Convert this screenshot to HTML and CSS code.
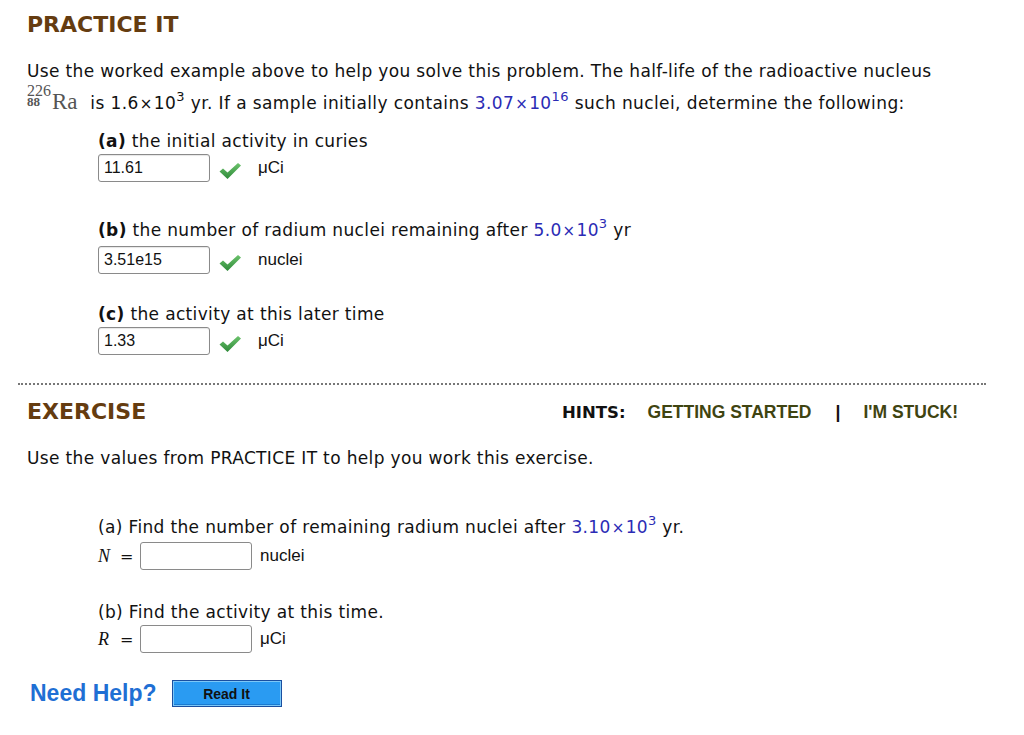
FILE: index.html
```html
<!DOCTYPE html>
<html>
<head>
<meta charset="utf-8">
<link rel="stylesheet" href="styles.css">
</head>
<body>
<div class="page">
  <section class="practice">
    <h2 class="title">PRACTICE IT</h2>
    <div class="intro">
      <div class="line1">Use the worked example above to help you solve this problem. The half-life of the radioactive nucleus</div>
      <div class="line2"><span class="nuc"><span class="iso"><span class="mass">226</span><span class="z">88</span></span><span class="ra">Ra</span></span> is 1.6<span class="times">×</span>10<sup>3</sup> yr. If a sample initially contains <span class="num">3.07<span class="times">×</span>10<sup>16</sup></span> such nuclei, determine the following:</div>
    </div>

    <div class="part part-a">
      <div class="qlabel"><b>(a)</b> the initial activity in curies</div>
      <div class="row">
        <span class="answer">11.61</span>
        <svg class="check" viewBox="0 0 24 20" width="24" height="20"><defs><linearGradient id="g1" x1="0" y1="0" x2="0" y2="1"><stop offset="0" stop-color="#6cc36c"/><stop offset="1" stop-color="#2f8a3a"/></linearGradient></defs><path d="M1.5 10.5 L5 7.5 L9.5 11.5 L20 2 L23 4.5 L9.5 18 Z" fill="url(#g1)"/></svg>
        <span class="unit">μCi</span>
      </div>
    </div>

    <div class="part part-b">
      <div class="qlabel"><b>(b)</b> the number of radium nuclei remaining after <span class="num">5.0<span class="times">×</span>10<sup>3</sup></span> yr</div>
      <div class="row">
        <span class="answer">3.51e15</span>
        <svg class="check" viewBox="0 0 24 20" width="24" height="20"><defs><linearGradient id="g2" x1="0" y1="0" x2="0" y2="1"><stop offset="0" stop-color="#6cc36c"/><stop offset="1" stop-color="#2f8a3a"/></linearGradient></defs><path d="M1.5 10.5 L5 7.5 L9.5 11.5 L20 2 L23 4.5 L9.5 18 Z" fill="url(#g2)"/></svg>
        <span class="unit">nuclei</span>
      </div>
    </div>

    <div class="part part-c">
      <div class="qlabel"><b>(c)</b> the activity at this later time</div>
      <div class="row">
        <span class="answer">1.33</span>
        <svg class="check" viewBox="0 0 24 20" width="24" height="20"><defs><linearGradient id="g3" x1="0" y1="0" x2="0" y2="1"><stop offset="0" stop-color="#6cc36c"/><stop offset="1" stop-color="#2f8a3a"/></linearGradient></defs><path d="M1.5 10.5 L5 7.5 L9.5 11.5 L20 2 L23 4.5 L9.5 18 Z" fill="url(#g3)"/></svg>
        <span class="unit">μCi</span>
      </div>
    </div>
  </section>

  <hr class="divider">

  <section class="exercise">
    <div class="ex-head">
      <h2 class="title">EXERCISE</h2>
      <div class="hints">
        <span class="hints-label">HINTS:</span>
        <span class="hint-link">GETTING STARTED</span>
        <span class="sep">|</span>
        <span class="hint-link">I'M STUCK!</span>
      </div>
    </div>
    <p class="ex-intro">Use the values from PRACTICE IT to help you work this exercise.</p>

    <div class="epart epart-a">
      <div class="elabel">(a) Find the number of remaining radium nuclei after <span class="num">3.10<span class="times">×</span>10<sup>3</sup></span> yr.</div>
      <div class="erow">
        <span class="var">N</span><span class="eq">=</span>
        <span class="blank"></span>
        <span class="eunit">nuclei</span>
      </div>
    </div>

    <div class="epart epart-b">
      <div class="elabel">(b) Find the activity at this time.</div>
      <div class="erow">
        <span class="var">R</span><span class="eq">=</span>
        <span class="blank"></span>
        <span class="eunit">μCi</span>
      </div>
    </div>

    <div class="help">
      <span class="need">Need Help?</span>
      <span class="readit">Read It</span>
    </div>
  </section>
</div>
</body>
</html>
```

FILE: styles.css
```css
* { box-sizing: border-box; }
body {
  margin: 0;
  background: #fff;
  color: #111;
  font-family: "DejaVu Sans", Verdana, sans-serif;
  font-size: 17px;
  letter-spacing: 0.35px;
}
.page {
  padding: 13px 0 0 0;
}
.practice, .exercise {
  padding-left: 27px;
}
.title {
  margin: 0;
  font-size: 22px;
  font-weight: bold;
  color: #653c10;
  line-height: 24px;
  letter-spacing: 0;
}
.intro {
  margin-top: 24px;
  line-height: 20px;
}
.line1 { height: 20px; white-space: nowrap; }
.line2 {
  margin-top: 11px;
  height: 20px;
  white-space: nowrap;
  letter-spacing: 0.4px;
}
.nuc {
  letter-spacing: 0;
  margin-right: 7px;
}
.iso {
  display: inline-block;
  vertical-align: 3px;
  margin-top: -14px;
  font-family: "Liberation Serif", "Times New Roman", serif;
  color: #555;
  letter-spacing: 0;
}
.iso .mass {
  display: block;
  font-size: 16px;
  line-height: 12px;
}
.iso .z {
  display: block;
  font-size: 13px;
  line-height: 10px;
  font-weight: bold;
}
.ra {
  font-family: "Liberation Serif", "Times New Roman", serif;
  font-size: 23px;
  color: #555;
  margin-left: 1px;
}
sup {
  font-size: 13px;
  vertical-align: baseline;
  position: relative;
  top: -8px;
  line-height: 0;
}
.times { font-size: 15px; margin: 0 1px; }
.num { color: #2b2bb5; }
.part {
  padding-left: 71px;
}
.qlabel {
  line-height: 22px;
  white-space: nowrap;
}
.part-a .qlabel { margin-top: 18px; }
.part-b .qlabel { margin-top: 37px; }
.part-c .qlabel { margin-top: 29px; }
.row {
  display: flex;
  align-items: center;
  margin-top: 2px;
  height: 28px;
}
.part-b .row { margin-top: 4px; }
.answer {
  width: 112px;
  height: 28px;
  border: 1px solid #8a8a8a;
  border-radius: 3px;
  padding: 4px 5px;
  font-family: "Liberation Sans", Arial, sans-serif;
  font-size: 16px;
  line-height: 18px;
  letter-spacing: 0;
  color: #111;
  box-shadow: inset 0 1px 1px rgba(0,0,0,0.1);
}
.check {
  margin-left: 8px;
  margin-top: 6px;
}
.unit {
  margin-left: 16px;
  font-family: "Liberation Sans", Arial, sans-serif;
  font-size: 17px;
  letter-spacing: 0;
}
.divider {
  border: 0;
  border-top: 2px dotted #777;
  margin: 28px 38px 0 18px;
  height: 0;
}
.ex-head {
  display: flex;
  align-items: center;
  margin-top: 15px;
}
.hints {
  margin-left: auto;
  margin-right: 66px;
  display: flex;
  align-items: center;
  font-family: "Liberation Sans", Arial, sans-serif;
  font-weight: bold;
  font-size: 17.5px;
  letter-spacing: 0;
}
.hints-label {
  font-family: "DejaVu Sans", Verdana, sans-serif;
  font-size: 16.5px;
  color: #111;
  margin-right: 22px;
}
.hint-link { color: #3f4411; }
.sep { margin: 0 23px 0 24px; color: #111; }
.ex-intro {
  margin: 23px 0 0 0;
  line-height: 22px;
}
.epart { padding-left: 71px; }
.elabel {
  line-height: 22px;
  white-space: nowrap;
}
.epart-a .elabel { margin-top: 47px; }
.epart-b .elabel { margin-top: 31px; }
.erow {
  display: flex;
  align-items: center;
  margin-top: 3px;
  height: 28px;
}
.epart-b .erow { margin-top: 2px; }
.var {
  font-family: "Liberation Serif", "Times New Roman", serif;
  font-style: italic;
  font-size: 18px;
  width: 22px;
}
.eq { width: 20px; font-size: 16px; }
.blank {
  width: 112px;
  height: 28px;
  border: 1px solid #8a8a8a;
  border-radius: 3px;
}
.eunit {
  margin-left: 8px;
  font-family: "Liberation Sans", Arial, sans-serif;
  font-size: 17px;
  letter-spacing: 0;
}
.help {
  margin-top: 27px;
  display: flex;
  align-items: center;
}
.need {
  margin-left: 3px;
  font-family: "Liberation Sans", Arial, sans-serif;
  font-weight: bold;
  font-size: 23px;
  letter-spacing: 0;
  color: #1f6fd4;
}
.readit {
  margin-left: 15px;
  width: 110px;
  height: 27px;
  display: flex;
  align-items: center;
  justify-content: center;
  background: #2a9bf2;
  border: 1px solid #1a4fa0;
  box-shadow: inset 0 0 0 1px #7cc8f8, inset 0 -2px 0 #1a7ad0;
  font-family: "Liberation Sans", Arial, sans-serif;
  font-weight: bold;
  font-size: 14px;
  letter-spacing: 0;
  color: #111;
}
```
